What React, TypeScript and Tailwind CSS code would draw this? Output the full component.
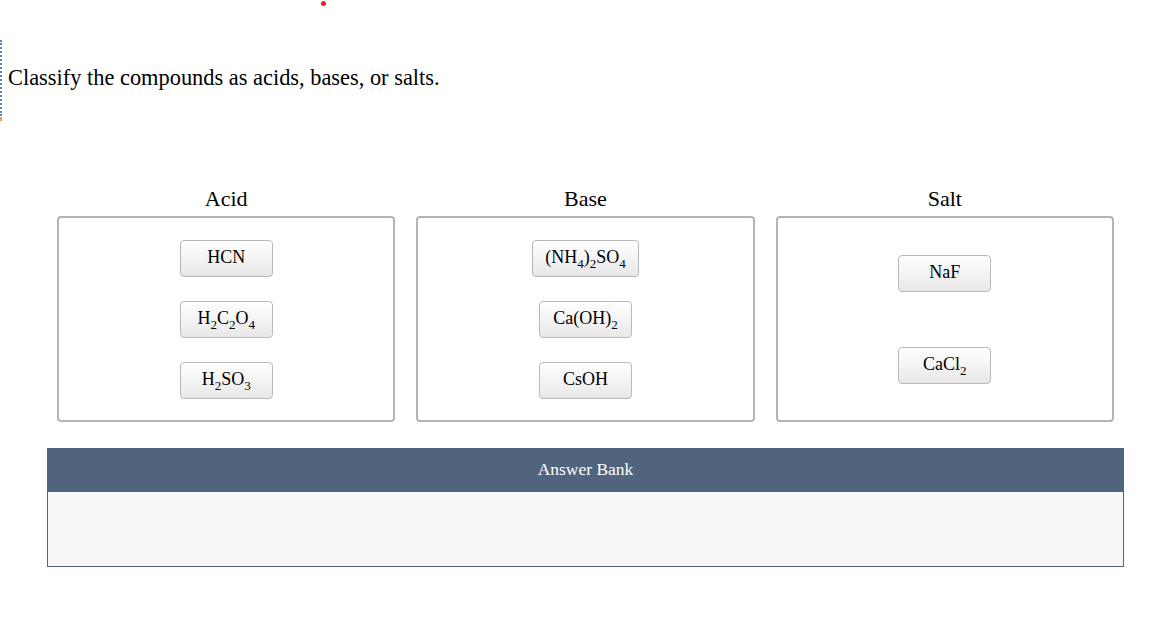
import React from "react";

type Item = { key: string; label: React.ReactNode };

const Sub = ({ children }: { children: React.ReactNode }) => (
  <sub className="bottom-[-0.4em] text-[13px]">{children}</sub>
);

const acids: Item[] = [
  { key: "hcn", label: <>HCN</> },
  {
    key: "h2c2o4",
    label: (
      <>
        H<Sub>2</Sub>C<Sub>2</Sub>O<Sub>4</Sub>
      </>
    ),
  },
  {
    key: "h2so3",
    label: (
      <>
        H<Sub>2</Sub>SO<Sub>3</Sub>
      </>
    ),
  },
];

const bases: Item[] = [
  {
    key: "nh4so4",
    label: (
      <>
        (NH<Sub>4</Sub>)<Sub>2</Sub>SO<Sub>4</Sub>
      </>
    ),
  },
  {
    key: "caoh2",
    label: (
      <>
        Ca(OH)<Sub>2</Sub>
      </>
    ),
  },
  { key: "csoh", label: <>CsOH</> },
];

const salts: Item[] = [
  { key: "naf", label: <>NaF</> },
  {
    key: "cacl2",
    label: (
      <>
        CaCl<Sub>2</Sub>
      </>
    ),
  },
];

function Chip({ children }: { children: React.ReactNode }) {
  return (
    <div className="flex h-[37px] min-w-[93px] items-center justify-center rounded-[4px] border border-[#b9b9b9] bg-gradient-to-b from-[#ffffff] to-[#e8e8e8] px-[12px] pb-[3px] text-[18px] leading-none text-black">
      <span>{children}</span>
    </div>
  );
}

function Bin({
  title,
  items,
  spread,
}: {
  title: string;
  items: Item[];
  spread?: boolean;
}) {
  return (
    <div className="flex flex-col items-stretch">
      <div className="mb-[4px] text-center text-[22px] leading-[26px]">{title}</div>
      <div
        className={
          spread
            ? "flex h-[206px] flex-col items-center gap-[55px] rounded-[4px] border-2 border-[#b4b4b4] pt-[37px]"
            : "flex h-[206px] flex-col items-center gap-[24px] rounded-[4px] border-2 border-[#b4b4b4] pt-[22px]"
        }
      >
        {items.map((it) => (
          <Chip key={it.key}>{it.label}</Chip>
        ))}
      </div>
    </div>
  );
}

export default function App() {
  return (
    <div className="relative min-h-screen bg-white font-['Liberation_Serif','Times_New_Roman',serif] text-black">
      {/* status dot */}
      <span className="absolute left-[321px] top-[1px] h-[5px] w-[5px] rounded-full bg-[#e3262b]" />
      {/* focus marker on the left edge */}
      <span className="absolute left-0 top-[40px] h-[76px] w-[2px] border-l-2 border-dotted border-[#5b7fc4]" />
      <span className="absolute left-0 top-[117px] h-[4px] w-[2px] bg-[#e0a060]" />

      <p className="pl-[8px] pt-[65px] text-[22.4px] leading-[26px]">
        Classify the compounds as acids, bases, or salts.
      </p>

      <div className="ml-[47px] mt-[95px] w-[1077px]">
        <div className="mx-[10px] grid grid-cols-3 gap-[21px]">
          <Bin title="Acid" items={acids} />
          <Bin title="Base" items={bases} />
          <Bin title="Salt" items={salts} spread />
        </div>

        <div className="mt-[26px]">
          <div className="flex h-[44px] items-center justify-center bg-[#50657d] pb-[2px] text-[17.5px] text-white">
            Answer Bank
          </div>
          <div className="h-[75px] border border-t-0 border-[#50657d] bg-[#f7f7f7]" />
        </div>
      </div>
    </div>
  );
}
